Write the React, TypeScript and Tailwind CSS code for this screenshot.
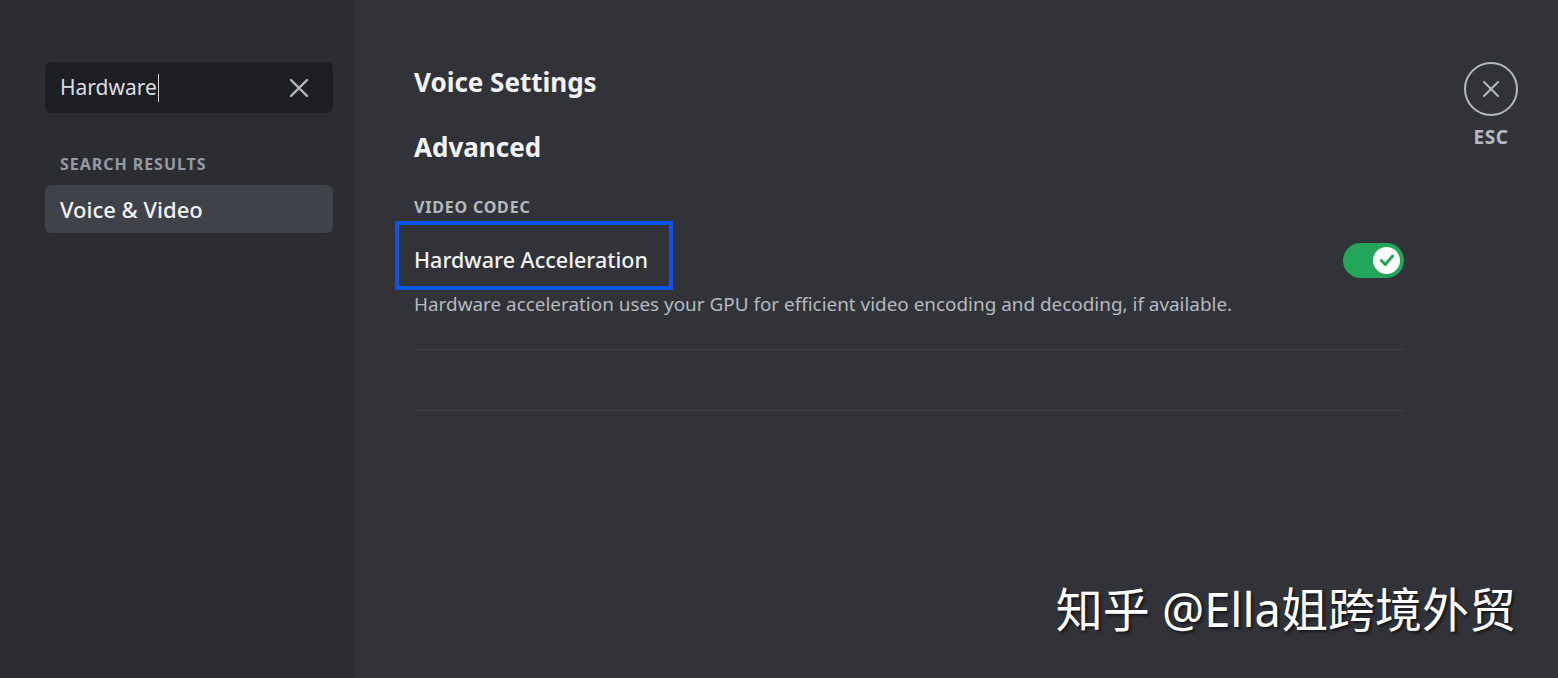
import React from "react";

export default function App() {
  return (
    <div
      className="flex w-[1558px] h-[678px] overflow-hidden bg-[#313338]"
      style={{ fontFamily: '"Noto Sans", "Open Sans", sans-serif' }}
    >
      {/* Sidebar */}
      <div className="w-[354px] shrink-0 bg-[#2b2d31] pt-[62px] pl-[45px] pr-[21px]">
        <div className="flex items-center h-[51px] rounded-[6px] bg-[#1e1f22] pl-[15px] pr-[24px]">
          <span className="text-[21px] text-[#dbdee1] leading-none">Hardware</span>
          <span className="w-[1px] h-[28px] bg-[#dbdee1] ml-[1px]" />
          <div className="flex-1" />
          <svg width="20" height="20" viewBox="0 0 20 20" className="text-[#b5bac1]">
            <path d="M2 2 L18 18 M18 2 L2 18" stroke="currentColor" strokeWidth="2.4" strokeLinecap="round" />
          </svg>
        </div>
        <div className="mt-[43px] pl-[15px] text-[16px] font-bold tracking-[0.06em] text-[#949ba4] leading-none">
          SEARCH RESULTS
        </div>
        <div className="mt-[13px] flex items-center h-[48px] rounded-[6px] bg-[#404249] pl-[15px] text-[22px] font-medium text-[#f2f3f5]">
          Voice &amp; Video
        </div>
      </div>

      {/* Main */}
      <div className="relative flex-1 flex">
        <div className="w-[990px] ml-[60px] pt-[64px]">
          <h1 className="text-[26px] font-bold text-[#f2f3f5] leading-[36px]">Voice Settings</h1>
          <h2 className="mt-[29px] text-[26px] font-bold text-[#f2f3f5] leading-[36px]">Advanced</h2>
          <div className="mt-[34px] text-[16px] font-bold tracking-[0.05em] text-[#b5bac1] leading-none">
            VIDEO CODEC
          </div>
          <div className="mt-[27px] flex items-center justify-between">
            <div className="relative">
              <span className="text-[21.5px] font-medium text-[#f2f3f5] leading-[36px]">
                Hardware Acceleration
              </span>
              <div className="absolute left-[-19px] top-[-21px] w-[278px] h-[69px] border-[4px] border-[#0a54e6]" />
            </div>
            <div className="flex items-center w-[61px] h-[35px] rounded-full bg-[#23a55a] justify-end pr-[4px]">
              <div className="w-[27px] h-[27px] rounded-full bg-white flex items-center justify-center">
                <svg width="18" height="18" viewBox="0 0 16 16">
                  <path d="M3 8.5 L6.5 12 L13 4.5" stroke="#23a55a" strokeWidth="2.6" fill="none" strokeLinecap="round" strokeLinejoin="round" />
                </svg>
              </div>
            </div>
          </div>
          <p className="mt-[12px] text-[18.9px] text-[#b5bac1] leading-[28px]">
            Hardware acceleration uses your GPU for efficient video encoding and decoding, if available.
          </p>
          <div className="mt-[31px] h-[1px] bg-[#3f4147]" />
          <div className="mt-[60px] h-[1px] bg-[#3f4147]" />
        </div>

        {/* ESC */}
        <div className="ml-[60px] pt-[62px] flex flex-col items-center">
          <div className="w-[54px] h-[54px] rounded-full border-[2.5px] border-[#b5bac1] flex items-center justify-center">
            <svg width="20" height="20" viewBox="0 0 20 20">
              <path d="M3 3 L17 17 M17 3 L3 17" stroke="#b5bac1" strokeWidth="2" strokeLinecap="round" />
            </svg>
          </div>
          <div className="mt-[12px] text-[19px] font-bold tracking-[0.03em] text-[#b5bac1] leading-none">ESC</div>
        </div>

        {/* Watermark */}
        <div
          className="absolute right-[42px] top-[577px] text-[47px] font-normal text-white leading-[64px] [text-shadow:2px_2px_3px_rgba(0,0,0,0.6)]"
          style={{ fontFamily: '"Noto Sans", "Noto Sans CJK SC", sans-serif' }}
        >
          知乎 @Ella姐跨境外贸
        </div>
      </div>
    </div>
  );
}
